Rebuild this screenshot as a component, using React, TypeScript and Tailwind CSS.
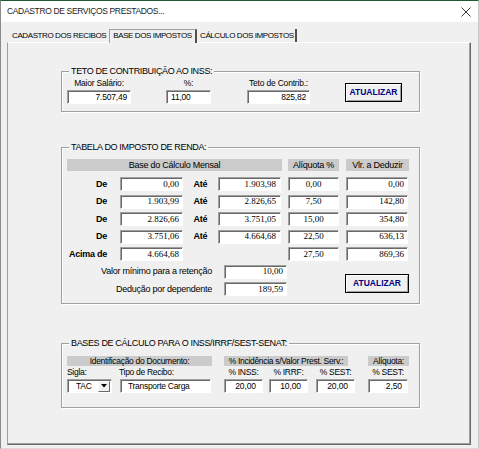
import React from "react";

const SANS = "font-['Liberation_Sans',Arial,sans-serif]";
const SERIF = "font-['Liberation_Serif','Times_New_Roman',serif]";

function Field({ className = "", children }: { className?: string; children?: React.ReactNode }) {
  return (
    <div
      className={`h-[14px] flex items-center whitespace-nowrap bg-white border border-t-[#a0a0a0] border-l-[#a0a0a0] border-r-white border-b-white shadow-[inset_1px_1px_0_#696969] leading-none text-black ${className}`}
    >
      {children}
    </div>
  );
}

function Atualizar({ className = "" }: { className?: string }) {
  return (
    <div
      className={`h-[19px] flex items-center justify-center bg-[#f0f0f0] border border-black shadow-[inset_1px_1px_0_#fff,inset_-1px_-1px_0_#a0a0a0] text-[8.5px] font-bold leading-none text-[#000080] ${className}`}
    >
      ATUALIZAR
    </div>
  );
}

function Frame({ title, className = "", children }: { title: string; className?: string; children: React.ReactNode }) {
  return (
    <div
      className={`ml-[53px] w-[359px] border border-[#a0a0a0] shadow-[inset_1px_1px_0_#fff,1px_1px_0_#fff] ${className}`}
    >
      <div className="-mt-[7px] ml-[7px] w-fit whitespace-nowrap bg-[#f0f0f0] px-[2px] text-[9px] tracking-[-0.35px] leading-[12px] text-black">
        {title}
      </div>
      {children}
    </div>
  );
}

const irRows = [
  ["0,00", "1.903,98", "0,00", "0,00"],
  ["1.903,99", "2.826,65", "7,50", "142,80"],
  ["2.826,66", "3.751,05", "15,00", "354,80"],
  ["3.751,06", "4.664,68", "22,50", "636,13"],
];

export default function App() {
  return (
    <div
      className={`${SANS} w-[479px] h-[449px] flex flex-col bg-[#f0f0f0] border-t border-t-[#1d5a36] border-l border-l-[#8a8a8a] border-r border-r-[#c8c8c8] border-b border-b-[#e6d6dc] text-black`}
    >
      {/* title bar */}
      <div className="h-[21px] shrink-0 bg-white flex items-center justify-between pl-[6px] pr-[6px]">
        <span className="text-[8.5px] tracking-[-0.35px] leading-none text-[#1a1a1a] whitespace-nowrap">CADASTRO DE SERVIÇOS PRESTADOS...</span>
        <svg width="10" height="10" viewBox="0 0 10 10" className="mr-[1px]">
          <path d="M0.5 0.5 L9.5 9.5 M9.5 0.5 L0.5 9.5" stroke="#333" strokeWidth="1" fill="none" />
        </svg>
      </div>

      <div className="flex-1 flex flex-col pt-[7px] pl-[6px] pr-[7px] pb-[3px]">
        {/* tabs */}
        <div className="flex h-[13px] text-[8px] tracking-[-0.4px] leading-none whitespace-nowrap">
          <div className="w-[102px] pl-[5px] flex items-center">CADASTRO DOS RECIBOS</div>
          <div className="relative z-10 -mb-px h-[14px] w-[88px] flex items-center justify-center bg-[#f0f0f0] border-l border-t border-r-2 border-l-[#a0a0a0] border-t-[#a0a0a0] border-r-[#505050] pb-px">
            BASE DOS IMPOSTOS
          </div>
          <div className="w-[100px] pl-[3px] flex items-center border-r-2 border-r-[#505050]">CÁLCULO DOS IMPOSTOS</div>
        </div>

        {/* tab page */}
        <div className="flex-1 flex flex-col pt-[28px] border border-t-white border-l-[#a0a0a0] border-r-[#696969] border-b-[#696969] shadow-[inset_-1px_-1px_0_#a0a0a0]">
          {/* INSS */}
          <Frame title="TETO DE CONTRIBUIÇÃO AO INSS:" className="pb-[7px]">
            <div className="ml-[5px] flex items-end text-[8.5px] tracking-[-0.2px] whitespace-nowrap">
              <div className="w-[64px] flex flex-col">
                <div className="leading-[12px] text-center">Maior Salário:</div>
                <Field className="mt-[1px] justify-end pr-[3px] text-[8.5px]">7.507,49</Field>
              </div>
              <div className="ml-[35px] w-[45px] flex flex-col">
                <div className="leading-[12px] text-center">%:</div>
                <Field className="mt-[1px] pl-[4px] text-[8.5px]">11,00</Field>
              </div>
              <div className="ml-[36px] w-[63px] flex flex-col">
                <div className="leading-[12px] text-center">Teto de Contrib.:</div>
                <Field className="mt-[1px] justify-end pr-[3px] text-[8.5px]">825,82</Field>
              </div>
              <Atualizar className="ml-[35px] w-[57px] mb-[2px] tracking-normal" />
            </div>
          </Frame>

          {/* IR */}
          <Frame title="TABELA DO IMPOSTO DE RENDA:" className="mt-[35px] pb-[7px]">
            <div className="ml-[5px] text-[9px] tracking-[-0.25px] whitespace-nowrap">
              <div className="mt-[6px] flex h-[12px] leading-[12px]">
                <div className="w-[215px] bg-[#cbcbcb] text-center">Base do Cálculo Mensal</div>
                <div className="ml-[6px] w-[51px] bg-[#cbcbcb] text-center">Alíquota %</div>
                <div className="ml-[7px] w-[63px] bg-[#cbcbcb] text-center">Vlr. a Deduzir</div>
              </div>
              <div className="mt-[6px] flex flex-col gap-[3.5px]">
                {irRows.map((r, i) => (
                  <div key={i} className="flex items-center h-[14px]">
                    <span className="w-[40px] text-right font-bold leading-none">De</span>
                    <Field className={`ml-[13px] w-[63px] justify-end pr-[3px] text-[9px] tracking-normal ${SERIF}`}>{r[0]}</Field>
                    <span className="w-[35px] text-center font-bold leading-none">Até</span>
                    <Field className={`w-[63px] justify-end pr-[4px] text-[9px] tracking-normal ${SERIF}`}>{r[1]}</Field>
                    <Field className={`ml-[7px] w-[51px] justify-center text-[9px] tracking-normal ${SERIF}`}>{r[2]}</Field>
                    <Field className={`ml-[7px] w-[62px] justify-end pr-[3px] text-[9px] tracking-normal ${SERIF}`}>{r[3]}</Field>
                  </div>
                ))}
                <div className="flex items-center h-[14px]">
                  <span className="w-[40px] text-right font-bold leading-none">Acima de</span>
                  <Field className={`ml-[13px] w-[63px] justify-end pr-[3px] text-[9px] tracking-normal ${SERIF}`}>4.664,68</Field>
                  <Field className={`ml-[105px] w-[51px] justify-center text-[9px] tracking-normal ${SERIF}`}>27,50</Field>
                  <Field className={`ml-[7px] w-[62px] justify-end pr-[3px] text-[9px] tracking-normal ${SERIF}`}>869,36</Field>
                </div>
              </div>
              <div className="mt-[3.5px] flex">
                <div className="flex flex-col gap-[3.5px]">
                  <div className="flex items-center h-[14px]">
                    <span className="w-[145px] text-right leading-none">Valor mínimo para a retenção</span>
                    <Field className={`ml-[12px] w-[63px] justify-end pr-[3px] text-[9px] tracking-normal ${SERIF}`}>10,00</Field>
                  </div>
                  <div className="flex items-center h-[14px]">
                    <span className="w-[145px] text-right leading-none">Dedução por dependente</span>
                    <Field className={`ml-[12px] w-[63px] justify-end pr-[3px] text-[9px] tracking-normal ${SERIF}`}>189,59</Field>
                  </div>
                </div>
                <Atualizar className="ml-[58px] w-[64px] self-end mb-[3px] tracking-normal" />
              </div>
            </div>
          </Frame>

          {/* bases */}
          <Frame title="BASES DE CÁLCULO PARA O INSS/IRRF/SEST-SENAT:" className="mt-[39px] pb-[14px]">
            <div className="ml-[5px] text-[8.5px] tracking-[-0.3px] whitespace-nowrap">
              <div className="mt-[7px] flex h-[10px] leading-[10px]">
                <div className="w-[145px] bg-[#cbcbcb] text-center">Identificação do Documento:</div>
                <div className="ml-[12px] w-[124px] bg-[#cbcbcb] text-center">% Incidência s/Valor Prest. Serv.:</div>
                <div className="ml-[20px] w-[41px] bg-[#cbcbcb] text-center">Alíquota:</div>
              </div>
              <div className="flex h-[12px] leading-[12px]">
                <div className="w-[52px]">Sigla:</div>
                <div className="w-[105px]">Tipo de Recibo:</div>
                <div className="w-[39px] text-center">% INSS:</div>
                <div className="ml-[6px] w-[39px] text-center">% IRRF:</div>
                <div className="ml-[8px] w-[39px] text-center">% SEST:</div>
                <div className="ml-[13px] w-[40px] text-center">% SEST:</div>
              </div>
              <div className="mt-[1px] flex">
                <Field className="w-[45px] justify-between pl-[8px] pr-[1px] text-[8.5px]">
                  <span>TAC</span>
                  <span className="h-[11px] w-[12px] flex items-center justify-center bg-[#f0f0f0] border border-t-white border-l-white border-r-[#696969] border-b-[#696969]">
                    <svg width="6" height="4" viewBox="0 0 6 4">
                      <path d="M0 0 H6 L3 3.5 Z" fill="#000" />
                    </svg>
                  </span>
                </Field>
                <Field className="ml-[8px] w-[91px] pl-[7px] text-[8.5px]">Transporte Carga</Field>
                <Field className="ml-[13px] w-[39px] justify-end pr-[6px] text-[8.5px] tracking-[-0.1px]">20,00</Field>
                <Field className="ml-[6px] w-[39px] justify-end pr-[6px] text-[8.5px] tracking-[-0.1px]">10,00</Field>
                <Field className="ml-[8px] w-[39px] justify-end pr-[6px] text-[8.5px] tracking-[-0.1px]">20,00</Field>
                <Field className="ml-[13px] w-[40px] justify-end pr-[5px] text-[8.5px] tracking-[-0.1px]">2,50</Field>
              </div>
            </div>
          </Frame>
        </div>
      </div>
    </div>
  );
}
